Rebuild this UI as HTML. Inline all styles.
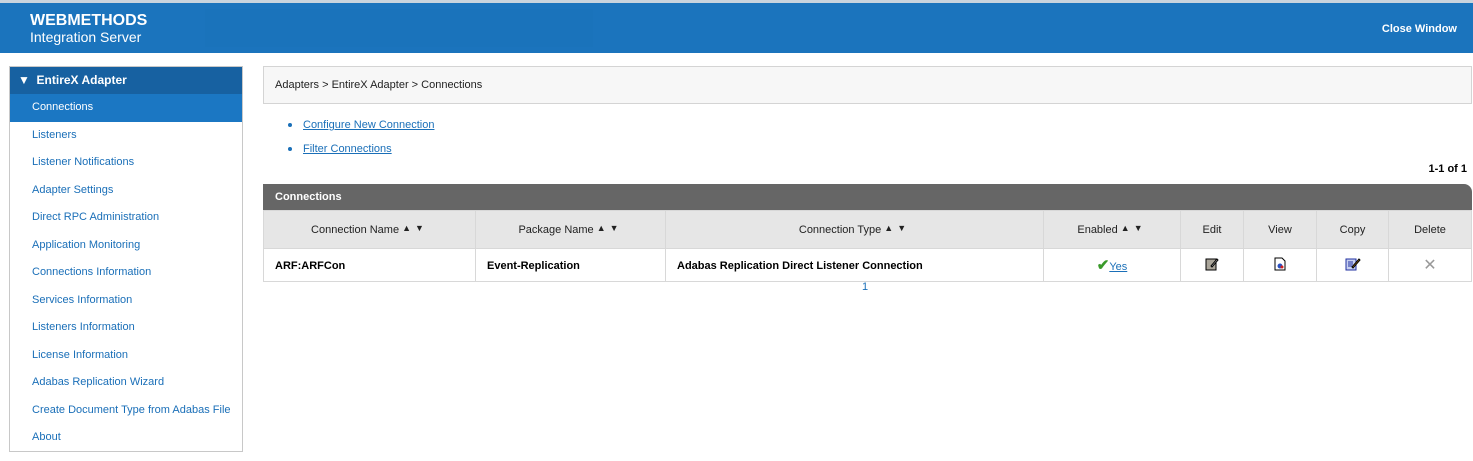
<!DOCTYPE html><html><head><style>
body{margin:0;width:1473px;height:461px;background:#fff;font-family:"Liberation Sans",sans-serif;position:relative;overflow:hidden}
.hdr{position:absolute;left:0;top:0;width:1473px;height:53px;background:#1b74bd;border-top:3px solid #c9d4de;box-sizing:border-box}
.hdr .mid{position:absolute;left:205px;top:6px;width:388px;height:38px;background:#1a73bb}
.t1{position:absolute;left:30px;top:9px;color:#fff;font-weight:bold;font-size:16px}
.t2{position:absolute;left:30px;top:26px;color:#fff;font-size:14px}
.cw{position:absolute;right:16px;top:20px;color:#fff;font-size:11px;font-weight:bold}
.side{position:absolute;left:9px;top:66px;width:232px;height:384px;border:1px solid #c8c8c8}
.sh{height:27px;background:#1761a1;color:#fff;font-weight:bold;font-size:12px;line-height:27px;padding-left:8px}
.si{height:27.5px;line-height:27.5px;padding-left:22px;font-size:11px;color:#1a6fb8}
.si.sel{background:#1b77c3;color:#fff}
.bc{position:absolute;left:263px;top:66px;border:1px solid #d4d4d4;background:#f7f7f7;font-size:11px;line-height:37px;padding-left:11px;box-sizing:border-box;width:1209px;height:38px;color:#222}
ul{position:absolute;left:286px;top:113px;margin:0;padding:0;list-style:none}
li{font-size:11px;color:#1a6fb8;text-decoration:underline;height:24px;line-height:24px;padding-left:17px;position:relative}
li:before{content:"";position:absolute;left:2px;top:10px;width:4px;height:4px;border-radius:2px;background:#1a6fb8}
.cnt{position:absolute;right:6px;top:163px;font-size:11px;font-weight:bold}
.bar{position:absolute;left:263px;top:184px;width:1209px;height:26px;background:#666;border-radius:0 8px 0 0;color:#fff;font-weight:bold;font-size:11px;line-height:26px;padding-left:12px;box-sizing:border-box}
table{position:absolute;left:263px;top:210px;width:1209px;border-collapse:collapse;font-size:11px;table-layout:fixed}
th{background:#e6e6e6;font-weight:normal;height:37px;padding:0;border:1px solid #d8d8d8;color:#222}
td{height:30px;padding:2px 0 0 11px;border:1px solid #d8d8d8;font-weight:bold}
td.c{text-align:center;padding:0}
.ar{font-size:9px;letter-spacing:4px;position:relative;top:-2px}
.pg{position:absolute;left:862px;top:281px;font-size:11px;color:#1a6fb8}
</style></head><body>
<div class="hdr"><div class="mid"></div><div class="t1">WEBMETHODS</div><div class="t2">Integration Server</div><div class="cw">Close Window</div></div>
<div class="side"><div class="sh">▼&nbsp; EntireX Adapter</div>
<div class="si sel">Connections</div><div class="si">Listeners</div><div class="si">Listener Notifications</div><div class="si">Adapter Settings</div><div class="si">Direct RPC Administration</div><div class="si">Application Monitoring</div><div class="si">Connections Information</div><div class="si">Services Information</div><div class="si">Listeners Information</div><div class="si">License Information</div><div class="si">Adabas Replication Wizard</div><div class="si">Create Document Type from Adabas File</div><div class="si">About</div></div>
<div class="bc">Adapters &gt; EntireX Adapter &gt; Connections</div>
<ul><li>Configure New Connection</li><li>Filter Connections</li></ul>
<div class="cnt">1-1 of 1</div>
<div class="bar">Connections</div>
<table><colgroup><col style="width:212px"><col style="width:190px"><col style="width:378px"><col style="width:137px"><col style="width:63px"><col style="width:73px"><col style="width:72px"><col></colgroup>
<tr><th>Connection Name <span class="ar">▲▼</span></th><th>Package Name <span class="ar">▲▼</span></th><th>Connection Type <span class="ar">▲▼</span></th><th>Enabled <span class="ar">▲▼</span></th><th>Edit</th><th>View</th><th>Copy</th><th>Delete</th></tr>
<tr><td>ARF:ARFCon</td><td>Event-Replication</td><td>Adabas Replication Direct Listener Connection</td><td class="c"><span style="color:#3a9a2a;font-size:15px">✔</span><span style="color:#1a6fb8;text-decoration:underline;font-weight:normal">Yes</span></td>
<td class="c"><svg width="14" height="14"><rect x="1" y="2" width="10" height="11" fill="#aaa59a" stroke="#000"/><path d="M6 9 L12 2 L13 3 L7 10 Z" fill="#fff" stroke="#000"/></svg></td>
<td class="c"><svg width="12" height="14"><path d="M1 1h7l3 3v9H1z" fill="#fff" stroke="#000"/><circle cx="6" cy="9" r="2.5" fill="#2a50c0"/><circle cx="8" cy="10" r="1.5" fill="#d02020"/></svg></td>
<td class="c"><svg width="16" height="14"><rect x="1" y="2" width="10" height="11" fill="#c8d0f0" stroke="#2030a0"/><path d="M3 5h5M3 7h5M3 9h5" stroke="#2030a0"/><path d="M7 10 L14 2 L15 3 L8 11 Z" fill="#f0a020" stroke="#000"/></svg></td>
<td class="c"><span style="color:#999;font-size:16px;font-weight:normal">✕</span></td></tr></table>
<div class="pg">1</div>
</body></html>
